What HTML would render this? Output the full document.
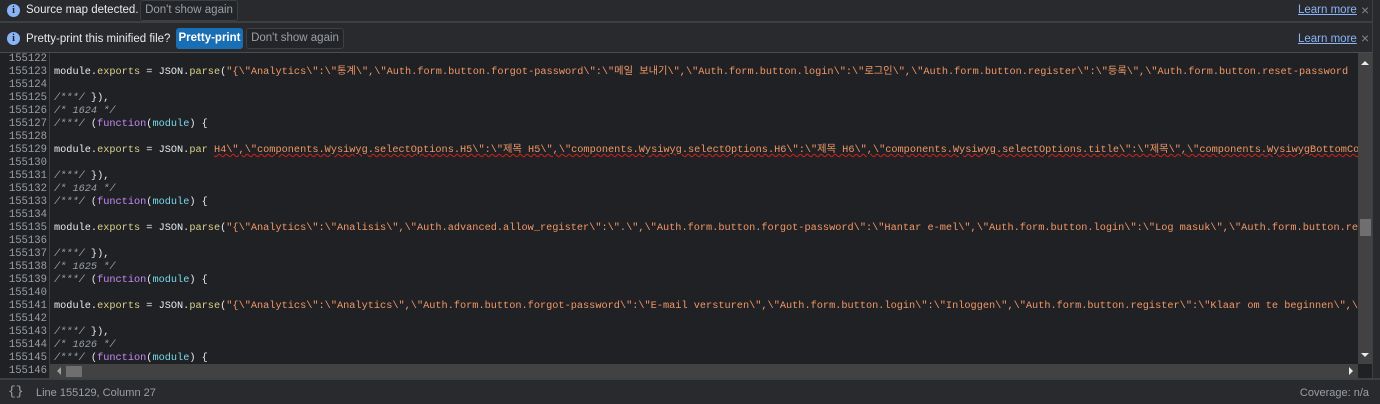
<!DOCTYPE html>
<html><head><meta charset="utf-8"><style>
body{margin:0;width:1380px;height:404px;background:#202124;overflow:hidden;font-family:"Liberation Sans","Noto Sans CJK KR",sans-serif;position:relative}
.bar{position:absolute;left:0;width:1380px;background:#292a2d;color:#e8eaed;font-size:11.5px}
.ic{position:absolute;width:13px;height:13px;border-radius:50%;background:#8ab4f8;color:#202124;font-size:10px;font-weight:bold;text-align:center;line-height:13px;font-family:"Liberation Serif",serif}
.btn{position:absolute;border:1px solid #3c4043;border-radius:3px;color:#9aa0a6;font-size:11.5px;line-height:19px;height:19px;text-align:center;background:#242528;white-space:nowrap}
.lm{position:absolute;color:#8ab4f8;text-decoration:underline;font-size:11.5px}
.x{position:absolute;color:#80868b;font-size:14px}
.code{position:absolute;left:0;top:53px;width:1358px;height:325px;overflow:hidden}
.ln{position:absolute;left:0;top:0;width:49px;border-right:1px solid #3c4043;height:325px;color:#9aa0a6;text-align:right;font-family:"Liberation Mono",monospace;font-size:10.6px;line-height:13px}
.ln div{padding-right:2px}
.src{position:absolute;left:54px;top:0;white-space:pre;font-family:"Liberation Mono","Noto Sans CJK KR",monospace;font-size:10.25px;line-height:13px;color:#e8eaed}
.s{color:#f29766}.f{color:#dcd08a}.c{color:#9aa0a6;font-style:italic}.k{color:#c58af9}.p{color:#78d9ec}
.u{text-decoration:underline wavy #c5221f}
</style></head><body>
<div class="bar" style="top:0;height:21px">
<div class="ic" style="left:7px;top:4px">i</div>
<span style="position:absolute;left:26px;top:4px">Source map detected.</span>
<div class="btn" style="left:140px;top:0px;width:96px">Don't show again</div>
<span class="lm" style="left:1298px;top:4px">Learn more</span><span class="x" style="left:1361px;top:2px">×</span>
</div>
<div style="position:absolute;top:21px;left:0;width:1380px;height:2px;background:#3c4043"></div>
<div class="bar" style="top:23px;height:29px">
<div class="ic" style="left:7px;top:9px">i</div>
<span style="position:absolute;left:26px;top:10px">Pretty-print this minified file?</span>
<div class="btn" style="left:176px;top:5px;width:65px;background:#1a6eb4;border-color:#1a6eb4;color:#fff;font-weight:bold">Pretty-print</div>
<div class="btn" style="left:246px;top:5px;width:96px">Don't show again</div>
<span class="lm" style="left:1298px;top:10px">Learn more</span><span class="x" style="left:1361px;top:7px">×</span>
</div>
<div style="position:absolute;top:52px;left:0;width:1380px;height:1px;background:#4a4c50"></div>
<div class="code">
<div class="ln"><div>155122</div><div>155123</div><div>155124</div><div>155125</div><div>155126</div><div>155127</div><div>155128</div><div>155129</div><div>155130</div><div>155131</div><div>155132</div><div>155133</div><div>155134</div><div>155135</div><div>155136</div><div>155137</div><div>155138</div><div>155139</div><div>155140</div><div>155141</div><div>155142</div><div>155143</div><div>155144</div><div>155145</div><div>155146</div></div>
<div class="src">
module.<span class="f">exports</span> = JSON.<span class="f">parse</span>(<span class="s">"{\"Analytics\":\"통계\",\"Auth.form.button.forgot-password\":\"메일 보내기\",\"Auth.form.button.login\":\"로그인\",\"Auth.form.button.register\":\"등록\",\"Auth.form.button.reset-password</span>

<span class="c">/***/</span> }),
<span class="c">/* 1624 */</span>
<span class="c">/***/</span> (<span class="k">function</span>(<span class="p">module</span>) {

module.<span class="f">exports</span> = JSON.<span class="f">par</span> <span class="s u">H4\",\"components.Wysiwyg.selectOptions.H5\":\"제목 H5\",\"components.Wysiwyg.selectOptions.H6\":\"제목 H6\",\"components.Wysiwyg.selectOptions.title\":\"제목\",\"components.WysiwygBottomControls</span>

<span class="c">/***/</span> }),
<span class="c">/* 1624 */</span>
<span class="c">/***/</span> (<span class="k">function</span>(<span class="p">module</span>) {

module.<span class="f">exports</span> = JSON.<span class="f">parse</span>(<span class="s">"{\"Analytics\":\"Analisis\",\"Auth.advanced.allow_register\":\".\",\"Auth.form.button.forgot-password\":\"Hantar e-mel\",\"Auth.form.button.login\":\"Log masuk\",\"Auth.form.button.reset</span>

<span class="c">/***/</span> }),
<span class="c">/* 1625 */</span>
<span class="c">/***/</span> (<span class="k">function</span>(<span class="p">module</span>) {

module.<span class="f">exports</span> = JSON.<span class="f">parse</span>(<span class="s">"{\"Analytics\":\"Analytics\",\"Auth.form.button.forgot-password\":\"E-mail versturen\",\"Auth.form.button.login\":\"Inloggen\",\"Auth.form.button.register\":\"Klaar om te beginnen\",\"Auth</span>

<span class="c">/***/</span> }),
<span class="c">/* 1626 */</span>
<span class="c">/***/</span> (<span class="k">function</span>(<span class="p">module</span>) {
</div>
</div>
<div style="position:absolute;left:1358px;top:53px;width:14px;height:311px;background:#424242"></div>
<div style="position:absolute;left:1361px;top:61px;width:0;height:0;border-left:4px solid transparent;border-right:4px solid transparent;border-bottom:4px solid #e8eaed"></div>
<div style="position:absolute;left:1360px;top:219px;width:11px;height:17px;background:#6f6f6f"></div>
<div style="position:absolute;left:1361px;top:353px;width:0;height:0;border-left:4px solid transparent;border-right:4px solid transparent;border-top:4px solid #e8eaed"></div>
<div style="position:absolute;left:1358px;top:364px;width:14px;height:14px;background:#202124"></div>
<div style="position:absolute;left:1372px;top:0;width:8px;height:380px;background:#292a2d;border-left:1px solid #3c4043"></div>
<div style="position:absolute;left:50px;top:364px;width:1308px;height:14px;background:#424242"></div>
<div style="position:absolute;left:57px;top:367px;width:0;height:0;border-top:4px solid transparent;border-bottom:4px solid transparent;border-right:4px solid #9aa0a6"></div>
<div style="position:absolute;left:66px;top:366px;width:16px;height:11px;background:#6f6f6f"></div>
<div style="position:absolute;left:1349px;top:367px;width:0;height:0;border-top:4px solid transparent;border-bottom:4px solid transparent;border-left:4px solid #e8eaed"></div>
<div style="position:absolute;left:0;top:378px;width:1380px;height:2px;background:#3c4043"></div>
<div style="position:absolute;left:0;top:380px;width:1380px;height:24px;background:#292a2d;color:#9aa0a6;font-size:11px">
<span style="position:absolute;left:8px;top:4px;font-size:13px;font-family:'Liberation Mono',monospace">{}</span>
<span style="position:absolute;left:36px;top:7px">Line 155129, Column 27</span>
<span style="position:absolute;right:11px;top:7px">Coverage: n/a</span>
</div>
</body></html>
